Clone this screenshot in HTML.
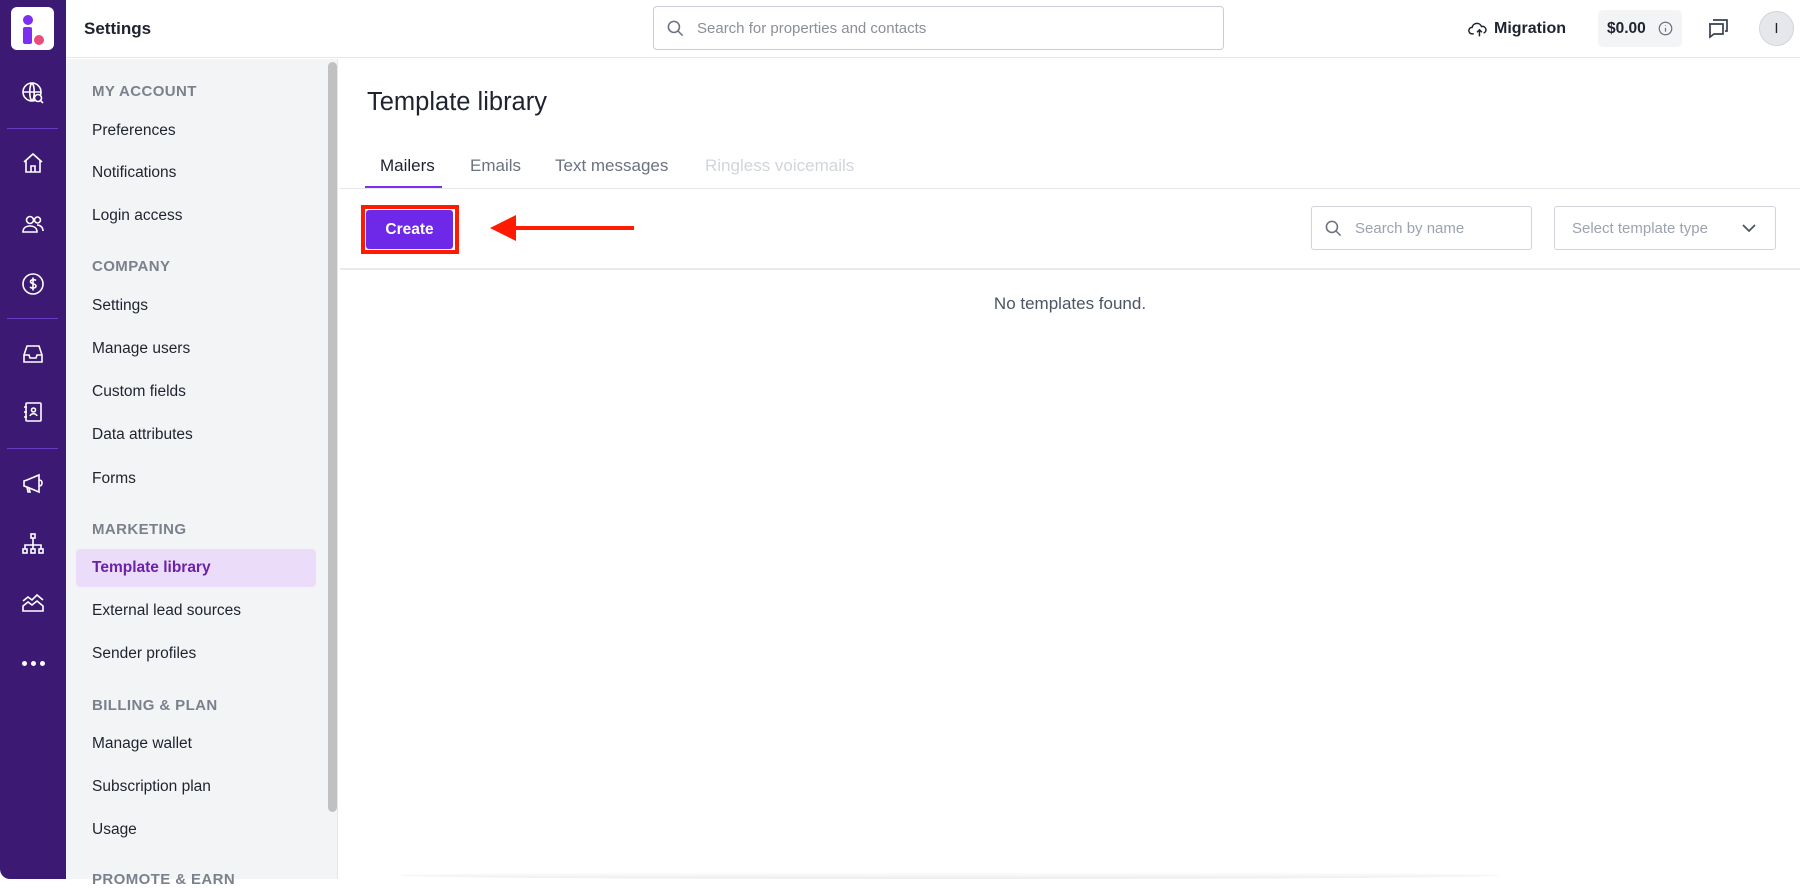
<!DOCTYPE html>
<html><head><meta charset="utf-8"><style>
*{box-sizing:border-box;margin:0;padding:0}
body{width:1800px;height:879px;overflow:hidden;background:#fff;font-family:"Liberation Sans",sans-serif;position:relative;color:#1f2330}
.abs{position:absolute}
.rail{left:0;top:0;width:66px;height:879px;background:#3c1a73;border-bottom-left-radius:10px}
.logo{left:11px;top:7px;width:43px;height:43px;background:#fff;border-radius:6px}
.ic{position:absolute;left:21px;width:24px;height:24px}
.sep{position:absolute;left:7px;width:51px;height:1px;background:#6a3cc4}
.top{left:66px;top:0;width:1734px;height:58px;border-bottom:1px solid #e5e7eb;background:#fff}
.nav{left:66px;top:59px;width:272px;height:820px;background:#f3f4f6;border-right:1px solid #e5e7eb}
.nav .i{position:absolute;left:26px;font-size:15.5px;color:#1f2330;white-space:nowrap}
.nav .h{font-size:15px;font-weight:bold;color:#7b818c;letter-spacing:.4px}
.nav .hl{position:absolute;left:10px;top:490px;width:240px;height:38px;background:#ebdcfa;border-radius:4px}
.scroll{left:328px;top:62px;width:9px;height:750px;background:#c1c1c1;border-radius:5px}
.t{font-size:15px;white-space:nowrap}
</style></head><body>
<div class="abs rail"></div>
<div class="abs logo"><div class="abs" style="left:12px;top:8px;width:10px;height:10px;border-radius:50%;background:#7c2ff0"></div><div class="abs" style="left:12px;top:20px;width:9px;height:17px;background:#7c2ff0;border-radius:2px"></div><div class="abs" style="left:23px;top:28px;width:10px;height:10px;border-radius:50%;background:#ea4d7a"></div></div>
<svg class="ic" style="top:81px" viewBox="0 0 24 24" fill="none" stroke="#fff" stroke-width="1.6"><circle cx="11" cy="11" r="9"/><path d="M2 11h18M11 2c-3 3-3 15 0 18M11 2c3 3 3 15 0 18"/><circle cx="17" cy="17" r="3.5" fill="#3c1a73"/><path d="M19.5 19.5l2.5 2.5"/></svg>
<div class="sep" style="top:128px"></div>
<svg class="ic" style="top:151px" viewBox="0 0 24 24" fill="none" stroke="#fff" stroke-width="1.6"><path d="M3 11l9-8 9 8M5 9v12h14V9M10 21v-6h4v6"/></svg>
<svg class="ic" style="top:212px" viewBox="0 0 24 24" fill="none" stroke="#fff" stroke-width="1.6"><circle cx="9" cy="8" r="3.5"/><circle cx="16.5" cy="8" r="3"/><path d="M2 20c0-4 3-6 7-6s7 2 7 6zM16 13c3 0 6 2 6 6"/></svg>
<svg class="ic" style="top:272px" viewBox="0 0 24 24" fill="none" stroke="#fff" stroke-width="1.6"><circle cx="12" cy="12" r="10"/><path d="M15 8.5c-1-1-5-1.5-5.5 1S15 11.5 15 14s-4.5 2.5-6 1M12 5.5v13"/></svg>
<div class="sep" style="top:318px"></div>
<svg class="ic" style="top:342px" viewBox="0 0 24 24" fill="none" stroke="#fff" stroke-width="1.6"><path d="M3 13l3-9h12l3 9v7H3zM3 13h5l1 3h6l1-3h5"/></svg>
<svg class="ic" style="top:400px" viewBox="0 0 24 24" fill="none" stroke="#fff" stroke-width="1.6"><rect x="5" y="3" width="15" height="18" rx="1"/><path d="M3 7h3M3 12h3M3 17h3"/><circle cx="12.5" cy="10" r="2"/><path d="M9 16c1-3 6-3 7 0"/></svg>
<div class="sep" style="top:448px"></div>
<svg class="ic" style="top:471px" viewBox="0 0 24 24" fill="none" stroke="#fff" stroke-width="1.6"><path d="M3 10v5l3 1 12 5V4L6 9zM6 16l1 5h2l-1-4M18 9c2 0 3 1 3 3s-1 3-3 3"/></svg>
<svg class="ic" style="top:532px" viewBox="0 0 24 24" fill="none" stroke="#fff" stroke-width="1.6"><rect x="10" y="2" width="4" height="4"/><rect x="2" y="17" width="4" height="4"/><rect x="10" y="17" width="4" height="4"/><rect x="18" y="17" width="4" height="4"/><path d="M12 6v11M4 17v-4h16v4"/></svg>
<svg class="ic" style="top:591px" viewBox="0 0 24 24" fill="none" stroke="#fff" stroke-width="1.6"><path d="M2 10l5-4 4 3 5-5 6 5M2 20v-5l5-4 4 3 5-4 6 5v5zM2 20h20"/></svg>
<div class="abs" style="left:22px;top:661px;font-size:0">
<span style="display:inline-block;width:5px;height:5px;border-radius:50%;background:#fff;margin-right:4px"></span><span style="display:inline-block;width:5px;height:5px;border-radius:50%;background:#fff;margin-right:4px"></span><span style="display:inline-block;width:5px;height:5px;border-radius:50%;background:#fff"></span></div>

<div class="abs top">
<div class="abs" style="left:18px;top:19px;font-size:17px;font-weight:bold;color:#1f2330">Settings</div>
<div class="abs" style="left:587px;top:6px;width:571px;height:44px;border:1px solid #c9ccd3;border-radius:4px">
<svg class="abs" style="left:12px;top:12px" width="19" height="19" viewBox="0 0 24 24" fill="none" stroke="#6b7280" stroke-width="2"><circle cx="10" cy="10" r="7"/><path d="M15 15l6 6"/></svg>
<div class="abs t" style="left:43px;top:13px;color:#8a8f98">Search for properties and contacts</div></div>
<svg class="abs" style="left:1401px;top:20px" width="20" height="18" viewBox="0 0 24 22" fill="none" stroke="#1f2330" stroke-width="1.8"><path d="M8 17H6a4 4 0 010-8 6 6 0 0111.5-1A4 4 0 0120 16M15 20v-7M12 15l3-3 3 3"/></svg>
<div class="abs" style="left:1428px;top:20px;font-size:16px;font-weight:bold">Migration</div>
<div class="abs" style="left:1532px;top:10px;width:84px;height:37px;background:#f3f4f6;border-radius:5px">
<div class="abs" style="left:9px;top:10px;font-size:15.5px;font-weight:bold">$0.00</div>
<svg class="abs" style="left:60px;top:11px" width="15" height="15" viewBox="0 0 24 24" fill="none" stroke="#6b7280" stroke-width="2"><circle cx="12" cy="12" r="10"/><path d="M12 11v6M12 7v1"/></svg></div>
<svg class="abs" style="left:1640px;top:16px" width="24" height="24" viewBox="0 0 24 24" fill="none" stroke="#374151" stroke-width="1.7"><path d="M7 4h14v11h-2M3 8h14v10H8l-4 3V8z"/></svg>
<div class="abs" style="left:1693px;top:11px;width:35px;height:35px;border-radius:50%;background:#e5e7eb;border:1px solid #d1d5db;text-align:center;line-height:33px;font-size:15px">I</div>
</div>

<div class="abs nav">
<div class="hl"></div>
<div class="i h" style="top:24px">MY ACCOUNT</div>
<div class="i" style="top:63px">Preferences</div>
<div class="i" style="top:105px">Notifications</div>
<div class="i" style="top:148px">Login access</div>
<div class="i h" style="top:199px">COMPANY</div>
<div class="i" style="top:238px">Settings</div>
<div class="i" style="top:281px">Manage users</div>
<div class="i" style="top:324px">Custom fields</div>
<div class="i" style="top:367px">Data attributes</div>
<div class="i" style="top:411px">Forms</div>
<div class="i h" style="top:462px">MARKETING</div>
<div class="i" style="top:500px;color:#6b21a8;font-weight:bold">Template library</div>
<div class="i" style="top:543px">External lead sources</div>
<div class="i" style="top:586px">Sender profiles</div>
<div class="i h" style="top:638px">BILLING &amp; PLAN</div>
<div class="i" style="top:676px">Manage wallet</div>
<div class="i" style="top:719px">Subscription plan</div>
<div class="i" style="top:762px">Usage</div>
<div class="i h" style="top:812px">PROMOTE &amp; EARN</div>
</div>
<div class="abs scroll"></div>

<div class="abs" style="left:367px;top:88px;font-size:25.5px;color:#1f2330">Template library</div>
<div class="abs" style="left:340px;top:188px;width:1460px;height:1px;background:#e5e7eb"></div>
<div class="abs" style="left:365px;top:186px;width:77px;height:2px;background:#7c2ff0"></div>
<div class="abs" style="left:380px;top:156px;font-size:17px;color:#1f2330">Mailers</div>
<div class="abs" style="left:470px;top:156px;font-size:17px;color:#6b7280">Emails</div>
<div class="abs" style="left:555px;top:156px;font-size:17px;color:#6b7280">Text messages</div>
<div class="abs" style="left:705px;top:156px;font-size:17px;color:#d1d5db">Ringless voicemails</div>

<div class="abs" style="left:361px;top:205px;width:98px;height:49px;border:4px solid #ff1a00"></div>
<div class="abs" style="left:366px;top:210px;width:87px;height:39px;background:#6d28e8;border-radius:3px;color:#fff;font-weight:bold;font-size:15.5px;text-align:center;line-height:39px">Create</div>
<div class="abs" style="left:512px;top:226px;width:122px;height:4px;background:#ff1a00"></div>
<div class="abs" style="left:490px;top:215px;width:0;height:0;border-top:13px solid transparent;border-bottom:13px solid transparent;border-right:26px solid #ff1a00"></div>

<div class="abs" style="left:1311px;top:206px;width:221px;height:44px;border:1px solid #d1d5db;border-radius:3px">
<svg class="abs" style="left:12px;top:12px" width="19" height="19" viewBox="0 0 24 24" fill="none" stroke="#6b7280" stroke-width="2"><circle cx="10" cy="10" r="7"/><path d="M15 15l6 6"/></svg>
<div class="abs t" style="left:43px;top:13px;color:#9ca3af">Search by name</div></div>
<div class="abs" style="left:1554px;top:206px;width:222px;height:44px;border:1px solid #d1d5db;border-radius:3px">
<div class="abs t" style="left:17px;top:13px;color:#9ca3af">Select template type</div>
<svg class="abs" style="left:187px;top:15px" width="14" height="12" viewBox="0 0 14 10" fill="none" stroke="#4b5563" stroke-width="1.8"><path d="M1 2l6 6 6-6"/></svg></div>
<div class="abs" style="left:340px;top:268px;width:1460px;height:2px;background:#e9eaee"></div>
<div class="abs" style="left:340px;top:294px;width:1460px;text-align:center;font-size:17px;color:#4b5563">No templates found.</div>
<div class="abs" style="left:400px;top:872px;width:1100px;height:7px;background:linear-gradient(#fff,#ececec);border-radius:50%"></div>
</body></html>
